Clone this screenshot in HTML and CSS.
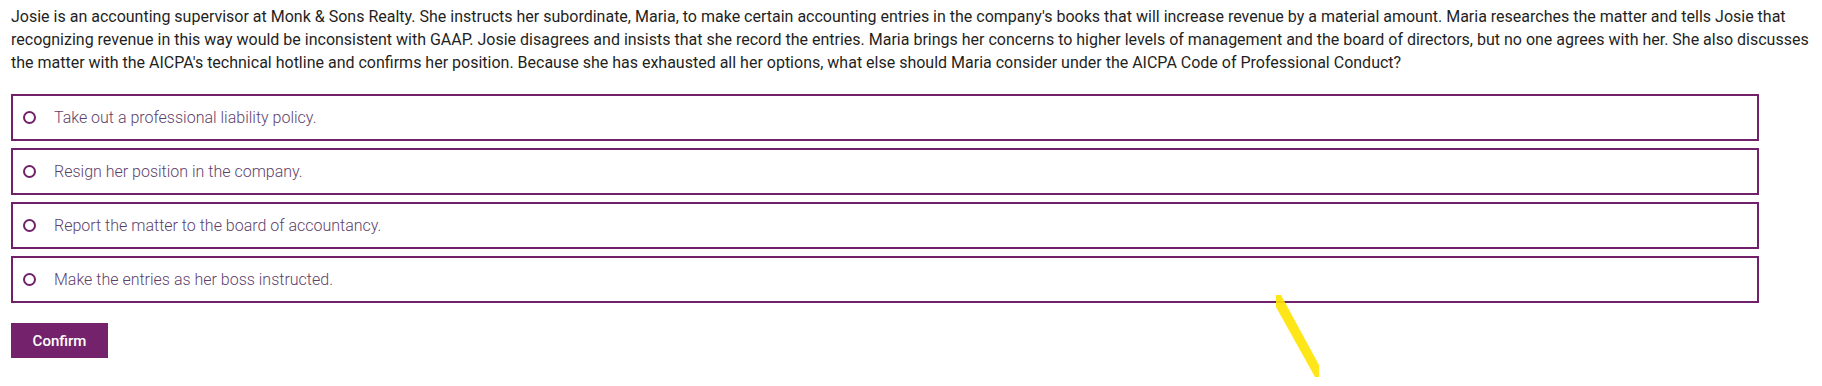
FILE: index.html
```html
<!DOCTYPE html>
<html>
<head>
<meta charset="utf-8">
<link rel="stylesheet" href="styles.css">
</head>
<body>
<div class="quiz">
  <p class="question">Josie is an accounting supervisor at Monk &amp; Sons Realty. She instructs her subordinate, Maria, to make certain accounting entries in the company's books that will increase revenue by a material amount. Maria researches the matter and tells Josie that recognizing revenue in this way would be inconsistent with GAAP. Josie disagrees and insists that she record the entries. Maria brings her concerns to higher levels of management and the board of directors, but no one agrees with her. She also discusses the matter with the AICPA's technical hotline and confirms her position. Because she has exhausted all her options, what else should Maria consider under the AICPA Code of Professional Conduct?</p>
  <div class="options">
    <label class="option"><span class="radio"></span><span class="label">Take out a professional liability policy.</span></label>
    <label class="option"><span class="radio"></span><span class="label">Resign her position in the company.</span></label>
    <label class="option"><span class="radio"></span><span class="label">Report the matter to the board of accountancy.</span></label>
    <label class="option"><span class="radio"></span><span class="label">Make the entries as her boss instructed.</span></label>
  </div>
  <button class="confirm">Confirm</button>
</div>
<svg class="mark" width="60" height="90" viewBox="1270 290 60 90"><polygon points="1276,295 1281,295 1319,365 1319,377 1315,377 1276,307" fill="#ffe400"/></svg>
</body>
</html>
```
FILE: styles.css
```css
html, body {
  margin: 0;
  padding: 0;
  background: #fff;
}
body {
  font-family: Roboto, "Noto Sans", sans-serif;
  width: 1822px;
  height: 386px;
  position: relative;
  overflow: hidden;
}
.quiz {
  padding: 5px 11px 0 11px;
  display: flex;
  flex-direction: column;
  align-items: flex-start;
}
.question {
  margin: 0;
  font-size: 16px;
  line-height: 23px;
  color: #1f1f1f;
}
.options {
  margin-top: 20px;
  display: flex;
  flex-direction: column;
  gap: 7px;
  width: 1748px;
}
.option {
  box-sizing: border-box;
  height: 47px;
  border: 2px solid #71216a;
  display: flex;
  align-items: center;
  padding-left: 10px;
}
.radio {
  box-sizing: border-box;
  width: 13px;
  height: 13px;
  border: 2.5px solid #71216a;
  border-radius: 50%;
  margin-right: 18px;
}
.label {
  font-size: 16px;
  font-weight: 300;
  color: #5e3f6c;
}
.confirm {
  margin-top: 20px;
  width: 97px;
  height: 35px;
  border: none;
  background: #74226c;
  color: #fff;
  font-family: Roboto, "Noto Sans", sans-serif;
  font-size: 15px;
  font-weight: 500;
  padding: 0;
}
.mark {
  position: absolute;
  left: 1270px;
  top: 290px;
  opacity: 0.9;
}
```
